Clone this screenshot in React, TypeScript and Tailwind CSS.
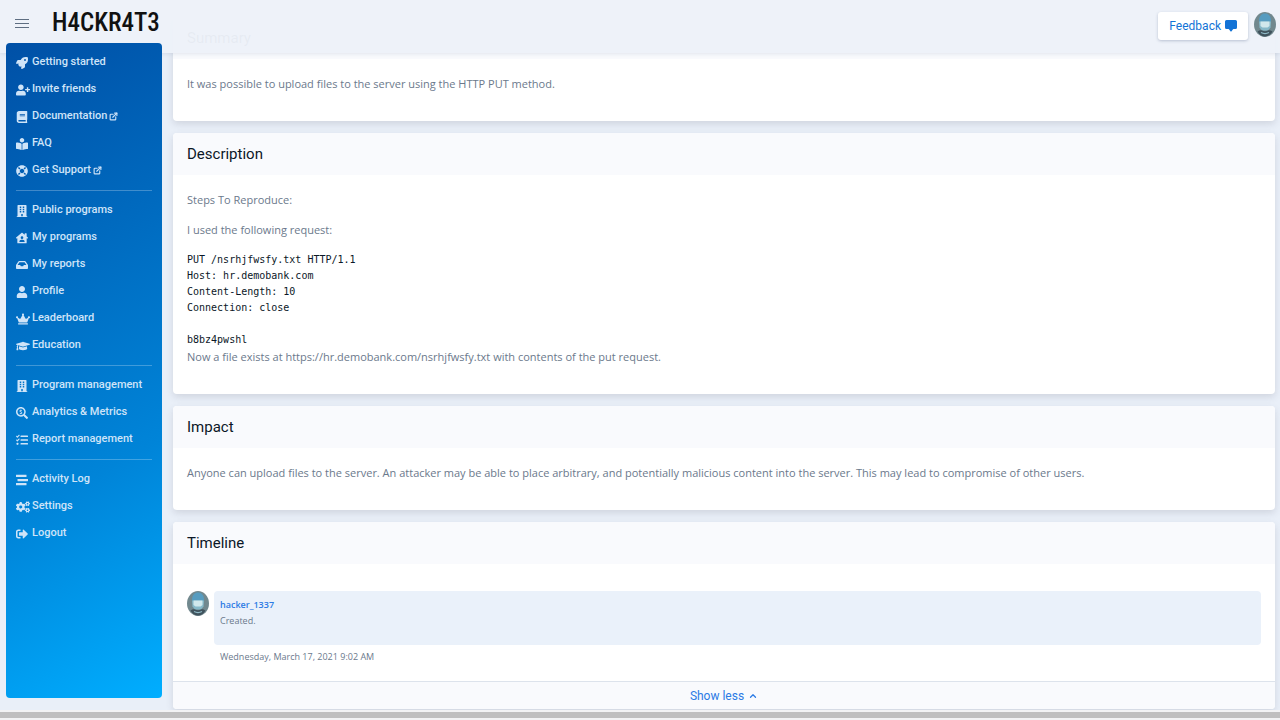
import type { ReactNode } from "react";
import type { IconType } from "react-icons";
import {
  FaBook,
  FaBookReader,
  FaBuilding,
  FaCogs,
  FaCrown,
  FaGraduationCap,
  FaHouseUser,
  FaInbox,
  FaLifeRing,
  FaRocket,
  FaSearchDollar,
  FaSignOutAlt,
  FaStream,
  FaTasks,
  FaUser,
  FaUserPlus,
} from "react-icons/fa";
import { BsChatSquareFill } from "react-icons/bs";
import { ChevronUp, ExternalLink } from "lucide-react";
import { clsx } from "clsx";

type NavItem = { label: string; icon: IconType; external?: boolean; wide?: boolean };

const NAV: NavItem[][] = [
  [
    { label: "Getting started", icon: FaRocket },
    { label: "Invite friends", icon: FaUserPlus, wide: true },
    { label: "Documentation", icon: FaBook, external: true },
    { label: "FAQ", icon: FaBookReader },
    { label: "Get Support", icon: FaLifeRing, external: true },
  ],
  [
    { label: "Public programs", icon: FaBuilding },
    { label: "My programs", icon: FaHouseUser },
    { label: "My reports", icon: FaInbox },
    { label: "Profile", icon: FaUser },
    { label: "Leaderboard", icon: FaCrown, wide: true },
    { label: "Education", icon: FaGraduationCap, wide: true },
  ],
  [
    { label: "Program management", icon: FaBuilding },
    { label: "Analytics & Metrics", icon: FaSearchDollar },
    { label: "Report management", icon: FaTasks },
  ],
  [
    { label: "Activity Log", icon: FaStream },
    { label: "Settings", icon: FaCogs, wide: true },
    { label: "Logout", icon: FaSignOutAlt },
  ],
];

const REQUEST = `PUT /nsrhjfwsfy.txt HTTP/1.1
Host: hr.demobank.com
Content-Length: 10
Connection: close

b8bz4pwshl`;

function Avatar() {
  return (
    <svg viewBox="0 0 22 25" className="h-[25px] w-[22px] shrink-0" role="img" aria-label="hacker_1337">
      <ellipse cx="11" cy="12.5" rx="11" ry="12.5" fill="#71888e" />
      <path d="M5 9c0-5 2.500-7.500 6-7.500S17 4 17 9l-1 2H6z" fill="#569cc0" />
      <path d="M5 9.500h12l-.5 6L14 18.500H8l-2.500-3z" fill="#86b9c9" />
      <path d="M6.500 9.500h9v4.500l-2 1.500h-5l-2-1.500z" fill="#d0e8ec" />
      <path d="M3.500 19.500c2-1.500 3.500-1.500 4.500-1 2 1 4 1 6 0 1-.5 2.500-.5 4.500 1-1.800 3.200-4.500 5-7.500 5s-5.700-1.800-7.500-5z" fill="#3f525c" />
      <path d="M7 20.500c2.500 1.300 5.500 1.300 8 0" stroke="#8fb9c6" strokeWidth="1.200" fill="none" />
    </svg>
  );
}

function Header() {
  return (
    <header className="absolute inset-x-0 top-0 z-10 flex h-[53px] items-start justify-between bg-[#edf2f9]/97 pr-1 pl-[15px] shadow-[0_1px_4px_rgba(60,80,120,0.12)]">
      <div className="flex items-center gap-[23px] pt-1">
        <button aria-label="Toggle menu" className="text-[#5e6e82]">
          <svg viewBox="0 0 14 10" className="h-[10px] w-[14px]" stroke="currentColor" strokeWidth="1.200">
            <path d="M0 1.500h14M0 5.500h14M0 9.500h14" />
          </svg>
        </button>
        <a
          href="#"
          className="font-['Liberation_Sans_Narrow','Roboto_Condensed','Liberation_Sans',sans-serif] text-[25px] leading-[38px] font-medium text-[#111]"
        >
          H4CKR4T3
        </a>
      </div>
      <div className="flex items-start gap-[6px] pt-3">
        <button className="flex h-7 items-center gap-1 rounded-[3px] bg-white px-[11px] text-[12px] text-[#1273d6] shadow-[0_1px_3px_rgba(60,80,120,0.3)]">
          Feedback
          <BsChatSquareFill size={12} />
        </button>
        <Avatar />
      </div>
    </header>
  );
}

function Sidebar() {
  return (
    <aside className="relative z-20 mt-[43px] mb-3 w-[156px] shrink-0 rounded bg-linear-[150deg,#0050a6,#0084d8_65%,#00aeff] px-[10px] py-[6px]">
      <nav>
        {NAV.map((group, i) => (
          <ul key={i} className={clsx(i > 0 && "mt-[6px] border-t border-white/25 pt-[6px]")}>
            {group.map(({ label, icon: Icon, external, wide }) => (
              <li key={label}>
                <a href="#" className="flex h-[27px] items-center text-[11px] font-medium whitespace-nowrap text-[#cfe4f8]">
                  <span className="flex w-4 shrink-0">
                    <Icon size={wide ? 14 : 12} />
                  </span>
                  {label}
                  {external && <ExternalLink size={9} strokeWidth={3} className="ml-[2px]" />}
                </a>
              </li>
            ))}
          </ul>
        ))}
      </nav>
    </aside>
  );
}

function Card({ title, children, footer }: { title: string; children: ReactNode; footer?: ReactNode }) {
  return (
    <section className="rounded bg-white shadow-[0_3px_7px_rgba(65,69,88,0.15)]">
      <h2 className="rounded-t bg-[#f9fafd] px-[14px] text-[15px] leading-[42px] text-[#0b1727]">{title}</h2>
      <div className="px-[14px] pt-4 pb-4 font-['Open_Sans',sans-serif] text-[11px] leading-[18px] text-[#6b798c]">
        {children}
      </div>
      {footer}
    </section>
  );
}

export default function App() {
  return (
    <div className="relative flex h-screen flex-col overflow-hidden bg-[#e9eff8] font-['Roboto',sans-serif]">
      <Header />
      <div className="flex min-h-0 flex-1 gap-[11px] overflow-hidden pr-[5px] pl-[6px]">
        <Sidebar />
        <main className="flex min-w-0 flex-1 flex-col gap-3 pt-[17px]">
          <Card title="Summary">
            <p className="mb-3">It was possible to upload files to the server using the HTTP PUT method.</p>
          </Card>
          <Card title="Description">
            <p className="mb-3">Steps To Reproduce:</p>
            <p className="mb-3">I used the following request:</p>
            <pre className="pt-px font-['DejaVu_Sans_Mono',monospace] text-[10px] leading-4 text-[#0b1727]">
              {REQUEST}
            </pre>
            <p className="mb-3">
              Now a file exists at https://hr.demobank.com/nsrhjfwsfy.txt with contents of the put request.
            </p>
          </Card>
          <Card title="Impact">
            <p className="mb-3">
              Anyone can upload files to the server. An attacker may be able to place arbitrary, and potentially
              malicious content into the server. This may lead to compromise of other users.
            </p>
          </Card>
          <Card
            title="Timeline"
            footer={
              <div className="flex h-7 items-center justify-center rounded-b border-t border-[#dde3ec] bg-[#f9fafd]">
                <button className="flex items-center gap-1 text-[12px] text-[#2c7be5]">
                  Show less <ChevronUp size={10} strokeWidth={3} />
                </button>
              </div>
            }
          >
            <div className="flex gap-[5px] pt-[11px] text-[9px] leading-4">
              <Avatar />
              <div className="min-w-0 flex-1">
                <div className="h-[54px] rounded bg-[#eaf1fa] px-[6px] py-[6px]">
                  <a href="#" className="block font-semibold text-[#2c7be5]">
                    hacker_1337
                  </a>
                  <p>Created.</p>
                </div>
                <p className="px-[6px] pt-1">Wednesday, March 17, 2021 9:02 AM</p>
              </div>
            </div>
          </Card>
        </main>
      </div>
      <div className="h-[10px] shrink-0 border-y-2 border-[#f2f3f4] bg-[#bfbfbf]" />
    </div>
  );
}
